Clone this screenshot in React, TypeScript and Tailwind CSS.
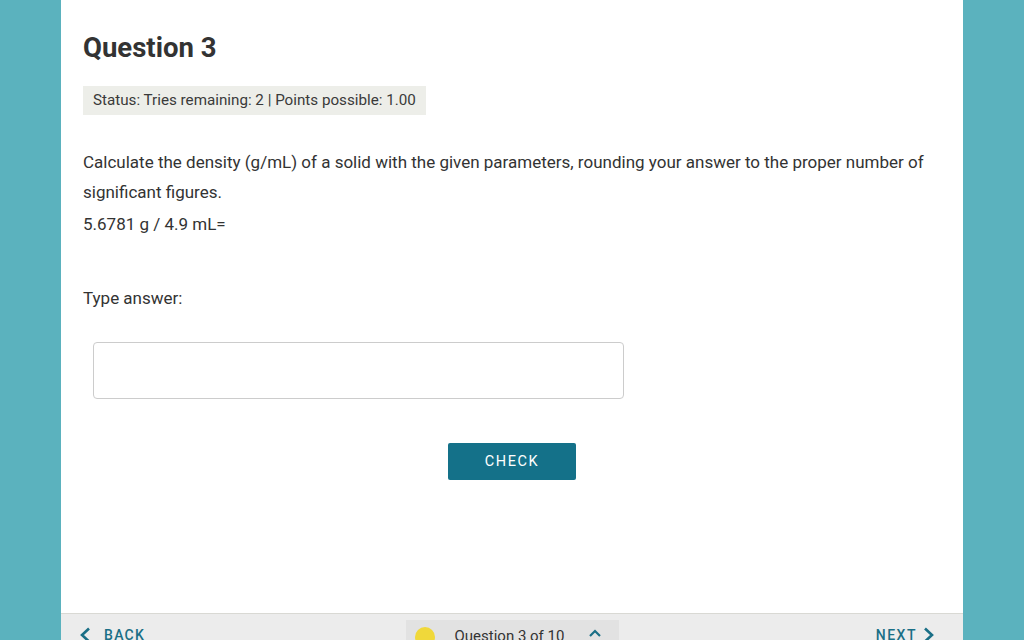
import React, { useState } from 'react';

export default function App() {
  const [answer, setAnswer] = useState('');

  return (
    <div
      className="h-[640px] w-full overflow-hidden bg-[#5bb2be] flex justify-center"
      style={{ fontFamily: 'Roboto, "Liberation Sans", sans-serif' }}
    >
      <div className="w-[902px] shrink-0 bg-white flex flex-col">
        {/* question body */}
        <div className="h-[613px] shrink-0 pl-[22px] pr-[22px] pt-[32px] text-[#333333]">
          <h1 className="text-[27.5px] leading-[32px] font-bold">Question 3</h1>

          <div className="mt-[22px] inline-block bg-[#edeee9] px-[10px] text-[15.2px] leading-[29px] text-[#3a3a3a]">
            Status: Tries remaining: 2 | Points possible: 1.00
          </div>

          <p className="mt-[32px] text-[17px] leading-[30px]">
            Calculate the density (g/mL) of a solid with the given parameters, rounding your answer to the proper number of
            significant figures.
          </p>
          <p className="mt-[2px] text-[17px] leading-[30px]">5.6781 g / 4.9 mL=</p>

          <p className="mt-[44px] text-[17px] leading-[30px]">Type answer:</p>

          <input
            type="text"
            value={answer}
            onChange={(e) => setAnswer(e.target.value)}
            className="mt-[29px] ml-[10px] block h-[57px] w-[531px] rounded-[4px] border border-[#cccccc] px-3 text-[16px] outline-none"
          />

          <div className="mt-[44px] flex justify-center">
            <button
              type="button"
              className="h-[37px] w-[128px] rounded-[2px] bg-[#147189] text-white text-[14.5px] font-normal tracking-[1.6px]"
            >
              CHECK
            </button>
          </div>
        </div>

        {/* footer nav */}
        <div className="h-[60px] shrink-0 border-t border-[#d9d9d4] bg-[#ececec] grid grid-cols-[1fr_auto_1fr] items-start px-[18px]">
          <button type="button" className="mt-[11px] justify-self-start flex items-center text-[#1a6f86]">
            <svg width="12" height="16" viewBox="0 0 12 16" fill="none" stroke="currentColor" strokeWidth={2.6}>
              <path d="M10 1.5 L3 8 L10 14.5" />
            </svg>
            <span className="ml-[13px] text-[14px] font-medium tracking-[1.3px] leading-[20px]">BACK</span>
          </button>

          <div className="mt-[6px] w-[213px] h-[40px] bg-[#e2e2e2] flex items-start pl-[9px]">
            <span className="mt-[7px] w-[20px] h-[20px] rounded-full bg-[#f0d83a]" />
            <span className="ml-[20px] mt-[5px] text-[15px] leading-[22px] text-[#333333]">Question 3 of 10</span>
            <svg className="ml-[24px] mt-[9px]" width="14" height="10" viewBox="0 0 14 10" fill="none" stroke="#1a6f86" strokeWidth={2.2}>
              <path d="M2 7 L7 2 L12 7" />
            </svg>
          </div>

          <button type="button" className="mt-[11px] mr-[10px] justify-self-end flex items-center text-[#1a6f86]">
            <span className="mr-[6px] text-[14px] font-medium tracking-[1.5px] leading-[20px]">NEXT</span>
            <svg width="12" height="16" viewBox="0 0 12 16" fill="none" stroke="currentColor" strokeWidth={2.6}>
              <path d="M2 1.5 L9 8 L2 14.5" />
            </svg>
          </button>
        </div>
      </div>
    </div>
  );
}
